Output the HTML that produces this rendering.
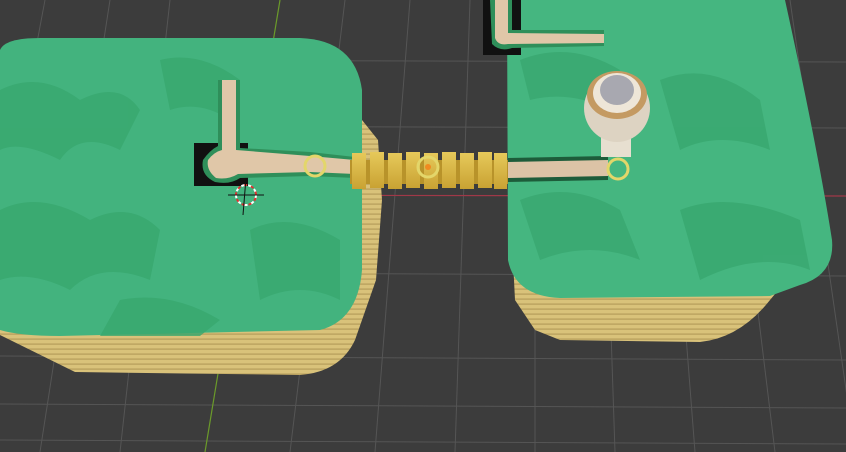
<!DOCTYPE html>
<html><head><style>html,body{margin:0;padding:0;background:#3d3d3d;overflow:hidden}svg{display:block}</style></head>
<body>
<svg width="846" height="452" viewBox="0 0 846 452" xmlns="http://www.w3.org/2000/svg">
<defs>
<pattern id="stripes" width="10" height="5" patternUnits="userSpaceOnUse">
<rect width="10" height="5" fill="#d9c27a"/><rect y="3.5" width="10" height="1.2" fill="#b59c5a"/>
</pattern>
<linearGradient id="wood" x1="0" y1="0" x2="0" y2="1"><stop offset="0" stop-color="#e6c95a"/><stop offset="1" stop-color="#c9a233"/></linearGradient>
</defs>
<rect width="846" height="452" fill="#3c3c3c"/>
<g stroke="#555" stroke-width="1" fill="none">
<line x1="0" y1="60" x2="846" y2="62"/>
<line x1="0" y1="126" x2="846" y2="128"/>
<line x1="0" y1="272" x2="846" y2="276"/>
<line x1="0" y1="356" x2="846" y2="360"/>
<line x1="0" y1="404" x2="846" y2="408"/>
<line x1="0" y1="440" x2="846" y2="444"/>
<line x1="45" y1="0" x2="-40" y2="452"/>
<line x1="110" y1="0" x2="40" y2="452"/>
<line x1="170" y1="0" x2="120" y2="452"/>
<line x1="345" y1="0" x2="290" y2="452"/>
<line x1="410" y1="0" x2="375" y2="452"/>
<line x1="470" y1="0" x2="455" y2="452"/>
<line x1="535" y1="0" x2="535" y2="452"/>
<line x1="600" y1="0" x2="615" y2="452"/>
<line x1="660" y1="0" x2="695" y2="452"/>
<line x1="720" y1="0" x2="775" y2="452"/>
<line x1="790" y1="0" x2="855" y2="452"/>
</g>
<line x1="0" y1="195" x2="846" y2="196" stroke="#a03848" stroke-width="1.2"/>
<line x1="280" y1="0" x2="205" y2="452" stroke="#6b9a2a" stroke-width="1.2"/>

<path d="M0 300 L0 335 L75 372 L300 375 Q340 372 355 340 L376 280 L382 200 L378 140 L362 120 L340 300 Z" fill="url(#stripes)"/>
<path d="M0 50 Q5 38 40 38 L300 38 Q355 40 362 90 L362 270 Q358 320 320 330 L60 336 Q20 336 0 330 Z" fill="#43b37e"/>
<g fill="#38a86f" opacity="0.8">
<path d="M0 90 Q40 70 80 100 Q120 80 140 110 L120 150 Q80 130 60 160 Q20 140 0 150 Z"/>
<path d="M0 210 Q40 190 90 220 Q130 200 160 230 L150 280 Q100 260 70 290 Q30 270 0 280 Z"/>
<path d="M160 60 Q200 50 240 80 L230 120 Q200 100 170 110 Z"/>
<path d="M250 230 Q290 210 340 240 L340 300 Q300 280 260 300 Z"/>
<path d="M120 300 Q170 290 220 320 L200 336 L100 336 Z"/>
</g>
<path d="M512 240 L515 300 L535 330 L560 340 L700 342 Q740 338 770 300 L795 270 Z" fill="url(#stripes)"/>
<path d="M507 0 L785 0 Q818 150 832 240 Q835 275 800 285 L770 296 L560 298 Q515 296 508 260 Z" fill="#45b680"/>
<g fill="#38a86f" opacity="0.8">
<path d="M520 60 Q570 40 620 70 L610 110 Q570 90 530 100 Z"/>
<path d="M660 80 Q710 60 760 100 L770 150 Q720 130 680 150 Z"/>
<path d="M520 200 Q570 180 620 210 L640 260 Q590 240 540 260 Z"/>
<path d="M680 210 Q730 190 800 220 L810 270 Q760 250 700 280 Z"/>
</g>

<g>
<rect x="194" y="143" width="54" height="43" fill="#111"/>
<path d="M218 80 L240 80 L240 148 L310 152 L310 176 L240 178 Q230 185 215 182 Q200 175 203 160 Q210 150 218 146 Z" fill="#2f8f5a"/>
<path d="M222 80 L236 80 L236 150 L310 156 L310 172 L238 174 Q228 180 216 178 Q206 170 208 160 Q214 152 222 150 Z" fill="#e0c7a8"/>
<path d="M310 152 L355 157 L355 178 L310 176 Z" fill="#2f8f5a"/>
<path d="M310 156 L355 160 L355 174 L310 172 Z" fill="#e0c7a8"/>
<path d="M508 158 L608 156 L608 180 L508 182 Z" fill="#1d5c3a"/>
<path d="M508 162 L608 160 L608 176 L508 178 Z" fill="#dcc3a6"/>
<rect x="483" y="0" width="38" height="55" fill="#111"/>
<path d="M490 0 L512 0 L512 30 L604 30 L604 46 L512 48 Q500 52 492 44 Z" fill="#2f8f5a"/>
<path d="M495 0 L508 0 L508 33 L604 34 L604 43 L508 44 Q498 46 495 38 Z" fill="#e0c7a8"/>
</g>
<g>
<rect x="350" y="160" width="158" height="24" fill="#b8932a"/>
<rect x="352" y="153" width="14" height="36" fill="url(#wood)"/>
<rect x="370" y="152" width="14" height="36" fill="url(#wood)"/>
<rect x="388" y="153" width="14" height="36" fill="url(#wood)"/>
<rect x="406" y="152" width="14" height="36" fill="url(#wood)"/>
<rect x="424" y="153" width="14" height="36" fill="url(#wood)"/>
<rect x="442" y="152" width="14" height="36" fill="url(#wood)"/>
<rect x="460" y="153" width="14" height="36" fill="url(#wood)"/>
<rect x="478" y="152" width="14" height="36" fill="url(#wood)"/>
<rect x="494" y="153" width="13" height="36" fill="url(#wood)"/>
</g>
<g>
<rect x="601" y="125" width="30" height="32" fill="#e7dfd0"/>
<rect x="604" y="128" width="5" height="4" fill="#222"/><rect x="613" y="128" width="5" height="4" fill="#222"/><rect x="622" y="128" width="5" height="4" fill="#222"/>
<ellipse cx="617" cy="108" rx="33" ry="34" fill="#ddd3c2"/>
<ellipse cx="617" cy="95" rx="30" ry="24" fill="#c49a62"/>
<ellipse cx="617" cy="93" rx="24" ry="20" fill="#eee6d8"/>
<ellipse cx="617" cy="90" rx="17" ry="15" fill="#a8a8b0"/>
</g>
<g fill="none" stroke="#e3d66a" stroke-width="3">
<circle cx="315" cy="166" r="10"/>
<circle cx="428" cy="167" r="10"/>
<circle cx="618" cy="169" r="10"/>
</g>
<circle cx="428" cy="167" r="3" fill="#f08a20"/>
<g>
<circle cx="246" cy="195" r="10" fill="none" stroke="#fff" stroke-width="2" stroke-dasharray="4 3"/>
<circle cx="246" cy="195" r="10" fill="none" stroke="#e03030" stroke-width="2" stroke-dasharray="3 4" stroke-dashoffset="4"/>
<line x1="228" y1="195" x2="264" y2="195" stroke="#111" stroke-width="1"/>
<line x1="246" y1="178" x2="243" y2="215" stroke="#111" stroke-width="1"/>
</g>
</svg>
</body></html>
